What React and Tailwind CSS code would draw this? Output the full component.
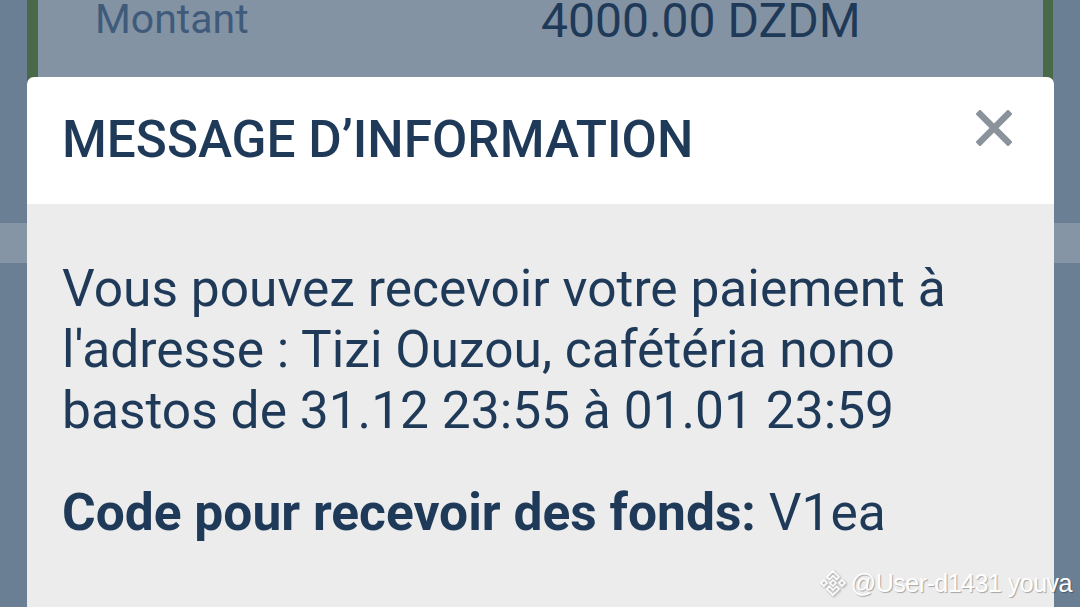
import React from 'react';

const CloseIcon = () => (
  <svg width="36" height="36" viewBox="0 0 36 36" className="block">
    <path d="M4 4 L32 32 M32 4 L4 32" stroke="#8a929b" strokeWidth="6.5" strokeLinecap="square" />
  </svg>
);

const WatermarkLogo = () => (
  <svg width="28" height="28" viewBox="0 0 28 28" className="block" style={{ filter: 'drop-shadow(1px 1px 1px rgba(0,0,0,0.35))' }}>
    <g fill="none" stroke="#ffffff" strokeWidth="1.6" strokeLinejoin="miter">
      <path d="M14 2 L20 8 L17.5 10.5 L14 7 L10.5 10.5 L8 8 Z" />
      <path d="M14 26 L20 20 L17.5 17.5 L14 21 L10.5 17.5 L8 20 Z" />
      <path d="M14 11 L17 14 L14 17 L11 14 Z" />
      <path d="M5 11 L8 14 L5 17 L2 14 Z" />
      <path d="M23 11 L26 14 L23 17 L20 14 Z" />
    </g>
  </svg>
);

const App = () => {
  const font = { fontFamily: 'Roboto, "Noto Sans", sans-serif' };

  return (
    <div className="relative w-[1080px] h-[607px] overflow-hidden bg-[#6b7f94]" style={font}>
      {/* page behind the dialog */}
      <div className="flex flex-col">
        <div className="mx-[27px] h-[223px] bg-[#8493a3] border-l-[11px] border-r-[10px] border-[#4a6949]">
          <div className="flex items-start h-[60px] -mt-[11px]">
            <div className="w-[57px]" />
            <div className="w-[446px] text-[41px] leading-[60px] text-[#3f5b7b]">Montant</div>
            <div className="text-[48px] leading-[72px] text-[#1f3a58] -mt-[4px]">4000.00 DZDM</div>
          </div>
        </div>
        <div className="h-[40px] bg-[#8595a5]" />
      </div>

      {/* dialog */}
      <div className="absolute left-[27px] right-[26px] top-[77px] bottom-0 flex flex-col rounded-t-[7px] overflow-hidden">
        <div className="h-[127px] bg-white flex items-center justify-between pl-[35px] pr-[42px]">
          <h2 className="text-[51.3px] font-medium text-[#1f3a58] leading-none mt-[-2px]">
            MESSAGE D’INFORMATION
          </h2>
          <div className="mb-[26px]">
            <CloseIcon />
          </div>
        </div>
        <div className="flex-1 bg-[#ececec] pl-[35px] pr-[40px] pt-[54px] text-[#1f3a58]">
          <p className="text-[51.5px] leading-[61px]">
            Vous pouvez recevoir votre paiement à l'adresse : Tizi Ouzou, cafétéria nono bastos de 31.12 23:55 à 01.01 23:59
          </p>
          <p className="text-[51.5px] leading-[61px] mt-[41px]">
            <span className="font-bold">Code pour recevoir des fonds:</span> V1ea
          </p>
        </div>
      </div>

      {/* watermark */}
      <div className="absolute right-[8px] bottom-[10px] flex items-center gap-[4px]">
        <WatermarkLogo />
        <span
          className="text-[25px] leading-none tracking-[-0.5px] text-white"
          style={{ fontFamily: '"Liberation Sans", Arial, sans-serif', textShadow: '1px 1px 1px rgba(0,0,0,0.3)' }}
        >
          @User-d1431 youva
        </span>
      </div>
    </div>
  );
};

export default App;
